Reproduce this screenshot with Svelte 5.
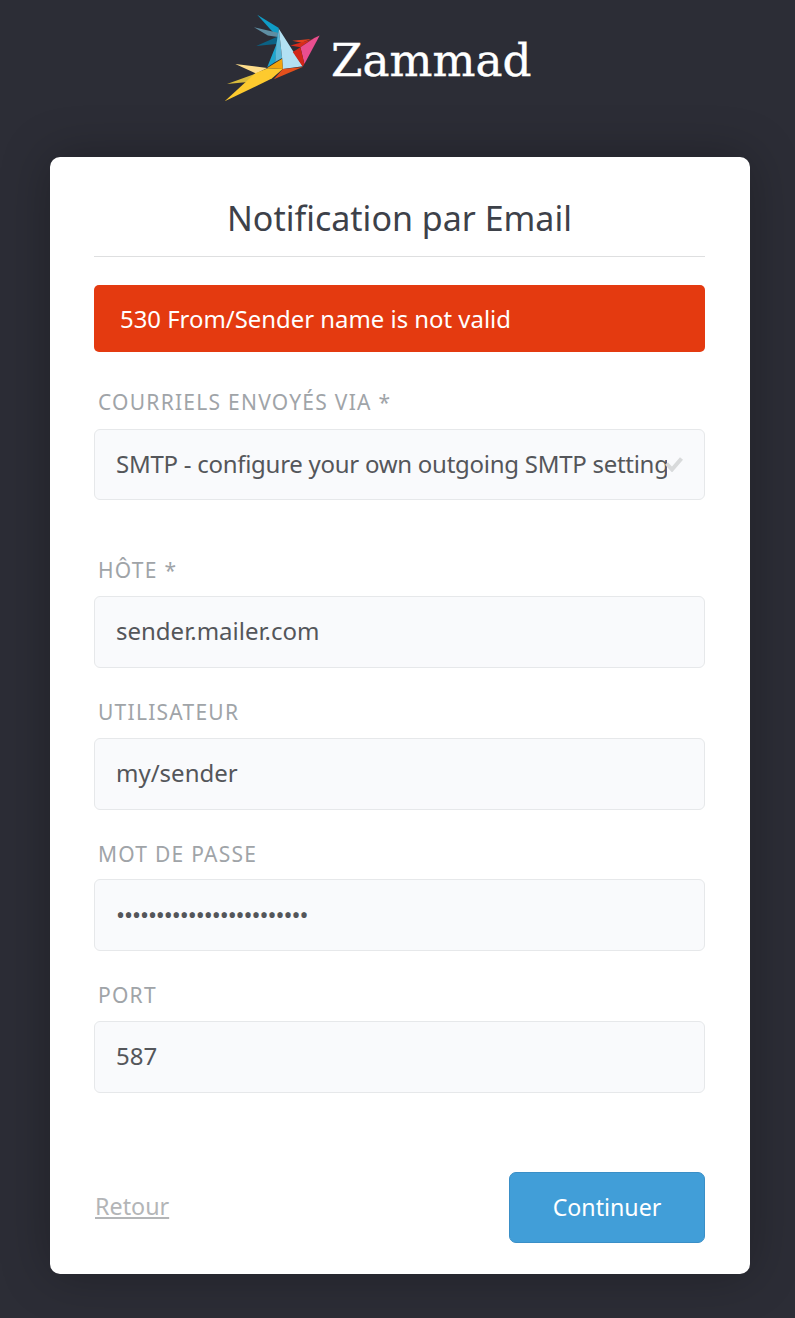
<script>
  const fields = [
    { label: 'Hôte *', value: 'sender.mailer.com', type: 'text' },
    { label: 'Utilisateur', value: 'my/sender', type: 'text' },
    { label: 'Mot de passe', value: 'secretpassword12345678ab', type: 'password' },
    { label: 'Port', value: '587', type: 'text' }
  ];
</script>

<main class="page">
  <header class="brand">
    <svg class="mark" viewBox="25 25 295 270" aria-hidden="true">
      <polygon points="128,30 193,70 190,97 168,74" fill="#0f9cc6"/>
      <polygon points="118,67 190,84 190,97 160,92" fill="#5f8ea3"/>
      <polygon points="125,124 190,95 186,118" fill="#0b6285"/>
      <polygon points="193,70 186,118 158,188 182,172" fill="#1fa5cd"/>
      <polygon points="193,72 203,160 182,172 186,118" fill="#5db8d8"/>
      <polygon points="193,72 265,185 205,193 203,160" fill="#b3e1f3"/>
      <polygon points="228,122 290,105 258,128" fill="#d92b1c"/>
      <polygon points="233,108 290,103 262,114" fill="#e4411f"/>
      <polygon points="316,90 300,100 258,128 290,105" fill="#cf2a1c"/>
      <polygon points="258,128 300,100 316,92 270,178" fill="#e94e8f"/>
      <polygon points="235,142 258,128 270,178 265,186" fill="#d02719"/>
      <polygon points="158,190 203,162 205,193" fill="#f4a40c"/>
      <polygon points="62,178 158,190 125,207" fill="#fedd8b"/>
      <polygon points="37,238 130,205 100,232" fill="#d9bb3c"/>
      <polygon points="30,290 122,206 160,191 205,193 172,222" fill="#fdca2e"/>
      <polygon points="205,193 265,187 178,224" fill="#e4501c"/>
    </svg>
    <span class="word">Zammad</span>
  </header>

  <section class="card">
    <h2>Notification par Email</h2>
    <div class="alert">530 From/Sender name is not valid</div>

    <div class="group select-group">
      <label for="via">Courriels envoyés via *</label>
      <div class="select-wrap">
        <select id="via">
          <option>SMTP - configure your own outgoing SMTP settings</option>
        </select>
        <svg class="check" viewBox="0 0 18 15" aria-hidden="true">
          <path d="M1.5 6.5 L7 12.5 L16.5 1.5" fill="none" stroke="#d8dadb" stroke-width="4"/>
        </svg>
      </div>
    </div>

    {#each fields as f, i}
      <div class="group">
        <label for={'f' + i}>{f.label}</label>
        <input id={'f' + i} type={f.type} value={f.value} class:secret={f.type === 'password'} />
      </div>
    {/each}

    <div class="actions">
      <a href="#back" class="back">Retour</a>
      <button type="button" class="primary">Continuer</button>
    </div>
  </section>
</main>

<style>
  :global(body) {
    margin: 0;
    background: #2c2d36;
    font-family: "Noto Sans", "Open Sans", sans-serif;
  }
  .page {
    width: 795px;
    height: 1318px;
    box-sizing: border-box;
    padding: 0 45px 0 50px;
    overflow: hidden;
  }
  .brand {
    height: 157px;
    box-sizing: border-box;
    padding: 13px 0 0 173px;
    display: flex;
    align-items: flex-start;
    gap: 10px;
  }
  .mark {
    width: 98px;
    height: 90px;
    flex: none;
  }
  .word {
    margin-top: 15px;
    font-family: "DejaVu Serif", serif;
    font-size: 45.3px;
    line-height: 66px;
    color: #fff;
    -webkit-text-stroke: 0.4px #fff;
  }
  .card {
    width: 700px;
    height: 1117px;
    box-sizing: border-box;
    padding: 36px 45px 0 44px;
    background: #fff;
    border-radius: 10px;
    box-shadow: 0 0 50px rgba(0, 0, 0, 0.28);
  }
  h2 {
    margin: 0;
    height: 64px;
    box-sizing: border-box;
    border-bottom: 1px solid #dedfe0;
    font-size: 34px;
    line-height: 50px;
    font-weight: 400;
    text-align: center;
    color: #3d4149;
  }
  .alert {
    margin-top: 28px;
    height: 67px;
    box-sizing: border-box;
    padding: 0 26px;
    display: flex;
    align-items: center;
    border-radius: 5px;
    background: #e43a10;
    color: #fff;
    font-size: 23.9px;
  }
  .group label {
    display: block;
    height: 69.67px;
    padding: 30px 4px 0;
    box-sizing: border-box;
    font-size: 21px;
    line-height: 28px;
    letter-spacing: 1.25px;
    text-transform: uppercase;
    color: #a0a4a8;
  }
  .select-group {
    margin-top: 7px;
    margin-bottom: 26.3px;
  }
  .select-group label {
    height: 70px;
    padding-top: 29px;
  }
  .select-wrap {
    position: relative;
  }
  input,
  select {
    display: block;
    width: 100%;
    height: 72px;
    box-sizing: border-box;
    padding: 0 21px 2px;
    border: 1px solid #e6e8ea;
    border-radius: 6px;
    background: #f9fafc;
    color: #54565a;
    font-family: inherit;
    font-size: 24px;
    outline: none;
  }
  .secret {
    letter-spacing: -1.05px;
  }
  select {
    height: 71px;
    appearance: none;
    padding-right: 37px;
    letter-spacing: -0.27px;
    white-space: nowrap;
    overflow: hidden;
  }
  .check {
    position: absolute;
    right: 22px;
    top: 28px;
    width: 18px;
    height: 15px;
  }
  .actions {
    margin-top: 79px;
    display: flex;
    align-items: center;
    justify-content: space-between;
  }
  .back {
    padding: 0 0 2px 1px;
    color: #b3b5b7;
    font-size: 23.3px;
    text-decoration: underline;
  }
  .primary {
    width: 196px;
    height: 71px;
    border: 1px solid #3a8fc7;
    border-radius: 7px;
    background: #419ed8;
    color: #fff;
    font-family: inherit;
    font-size: 23.2px;
  }
</style>
